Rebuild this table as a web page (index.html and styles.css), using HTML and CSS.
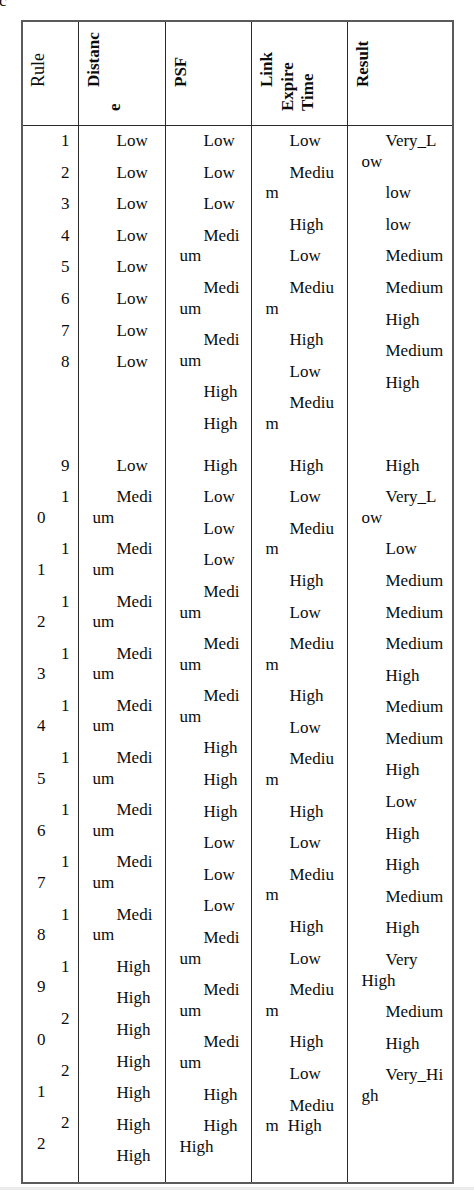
FILE: index.html
```html
<!DOCTYPE html>
<html>
<head>
<meta charset="utf-8">
<link rel="stylesheet" href="styles.css">
</head>
<body>
<div class="frag"><span class="frag-in">c</span></div>
<table class="rules">
  <colgroup>
    <col class="w-rule"><col class="w-dist"><col class="w-psf"><col class="w-link"><col class="w-res">
  </colgroup>
  <thead>
    <tr>
      <th><div class="vh"><span class="plain">Rule</span></div></th>
      <th><div class="vh">Distanc<br>e</div></th>
      <th><div class="vh">PSF</div></th>
      <th><div class="vh">Link<br>Expire<br>Time</div></th>
      <th><div class="vh">Result</div></th>
    </tr>
  </thead>
  <tbody>
    <tr class="row-a">
      <td>
        <p>1</p><p>2</p><p>3</p><p>4</p><p>5</p><p>6</p><p>7</p><p>8</p>
      </td>
      <td>
        <p>Low</p><p>Low</p><p>Low</p><p>Low</p><p>Low</p><p>Low</p><p>Low</p><p>Low</p>
      </td>
      <td>
        <p>Low</p><p>Low</p><p>Low</p><p>Medi<br>um</p><p>Medi<br>um</p><p>Medi<br>um</p><p>High</p><p>High</p>
      </td>
      <td>
        <p>Low</p><p>Mediu<br>m</p><p>High</p><p>Low</p><p>Mediu<br>m</p><p>High</p><p>Low</p><p>Mediu<br>m</p>
      </td>
      <td>
        <p>Very_L<br>ow</p><p>low</p><p>low</p><p>Medium</p><p>Medium</p><p>High</p><p>Medium</p><p>High</p>
      </td>
    </tr>
    <tr class="row-b">
      <td>
        <p>9</p><p>1<br>0</p><p>1<br>1</p><p>1<br>2</p><p>1<br>3</p><p>1<br>4</p><p>1<br>5</p><p>1<br>6</p><p>1<br>7</p><p>1<br>8</p><p>1<br>9</p><p>2<br>0</p><p>2<br>1</p><p>2<br>2</p>
      </td>
      <td>
        <p>Low</p><p>Medi<br>um</p><p>Medi<br>um</p><p>Medi<br>um</p><p>Medi<br>um</p><p>Medi<br>um</p><p>Medi<br>um</p><p>Medi<br>um</p><p>Medi<br>um</p><p>Medi<br>um</p><p>High</p><p>High</p><p>High</p><p>High</p><p>High</p><p>High</p><p>High</p>
      </td>
      <td>
        <p>High</p><p>Low</p><p>Low</p><p>Low</p><p>Medi<br>um</p><p>Medi<br>um</p><p>Medi<br>um</p><p>High</p><p>High</p><p>High</p><p>Low</p><p>Low</p><p>Low</p><p>Medi<br>um</p><p>Medi<br>um</p><p>Medi<br>um</p><p>High</p><p>High<br>High</p>
      </td>
      <td>
        <p>High</p><p>Low</p><p>Mediu<br>m</p><p>High</p><p>Low</p><p>Mediu<br>m</p><p>High</p><p>Low</p><p>Mediu<br>m</p><p>High</p><p>Low</p><p>Mediu<br>m</p><p>High</p><p>Low</p><p>Mediu<br>m</p><p>High</p><p>Low</p><p>Mediu<br>m<span class="gap">High</span></p>
      </td>
      <td>
        <p>High</p><p>Very_L<br>ow</p><p>Low</p><p>Medium</p><p>Medium</p><p>Medium</p><p>High</p><p>Medium</p><p>Medium</p><p>High</p><p>Low</p><p>High</p><p>High</p><p>Medium</p><p>High</p><p>Very<br>High</p><p>Medium</p><p>High</p><p>Very_Hi<br>gh</p>
      </td>
    </tr>
  </tbody>
</table>
<div class="band"></div>
</body>
</html>
```
FILE: styles.css
```css
html, body {
  margin: 0;
  padding: 0;
  background: #ffffff;
}
body {
  font-family: "Liberation Serif", "Times New Roman", serif;
  font-size: 17px;
  color: #0c0c0c;
}
.frag {
  height: 9px;
  overflow: hidden;
  line-height: 17px;
}
.frag-in {
  display: block;
  margin-top: -8px;
  margin-left: -1px;
}
.rules {
  border-collapse: collapse;
  table-layout: fixed;
  width: 431px;
  margin: 11px 0 0 21px;
  border: 2px solid #5a5a5a;
}
.w-rule { width: 56px; }
.w-dist { width: 87px; }
.w-psf { width: 86px; }
.w-link { width: 96px; }
.w-res { width: 106px; }
th, td {
  border: 1px solid #2a2a2a;
  vertical-align: top;
  text-align: left;
}
th {
  padding: 0;
  height: 103px;
}
.vh {
  box-sizing: border-box;
  height: 103px;
  width: 100%;
  writing-mode: vertical-rl;
  transform: rotate(180deg);
  padding: 14px 5px 0 0;
  line-height: 20.6px;
  text-indent: 24px;
  font-weight: bold;
  white-space: nowrap;
}
.plain {
  font-weight: normal;
  font-size: 18px;
}
td {
  padding: 5px 2px 4px 14px;
}
.row-a td {
  border-bottom: hidden;
}
.row-b td {
  border-top: hidden;
  padding-top: 6px;
}
td p {
  margin: 0 0 11px 0;
  line-height: 20.6px;
  text-indent: 24px;
  white-space: nowrap;
}
.gap {
  margin-left: 9px;
}
.band {
  margin-top: 3px;
  height: 10px;
  background: #ebebeb;
}
```
